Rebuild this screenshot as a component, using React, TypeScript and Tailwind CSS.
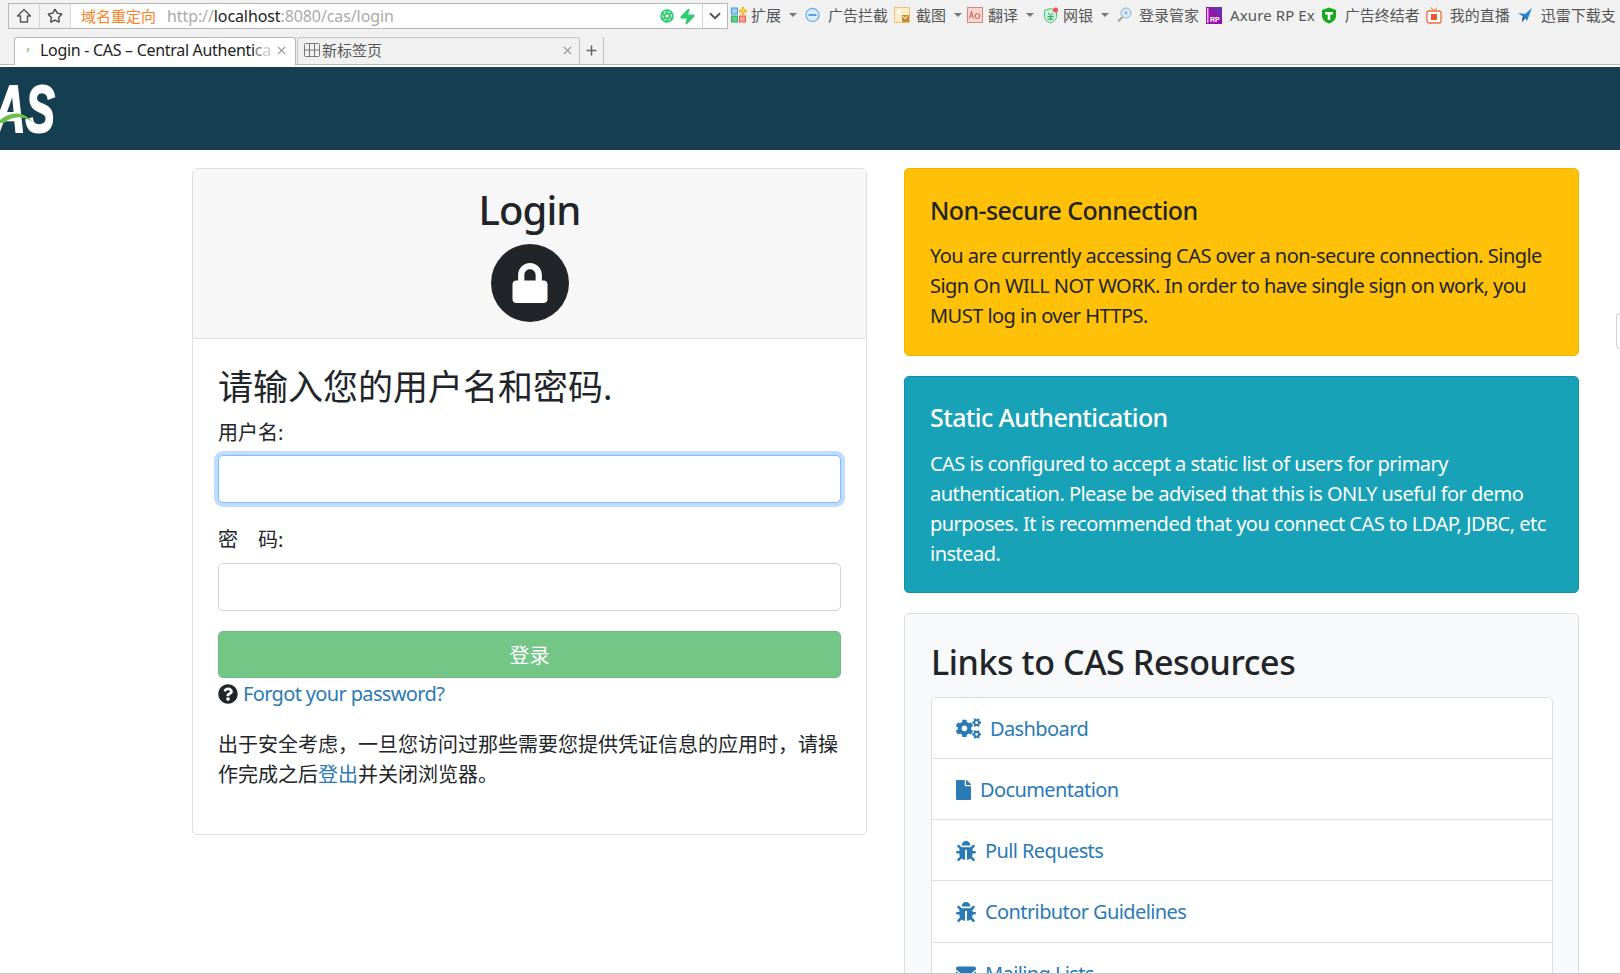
import React from "react";
import { Aperture, ChevronDown, Plus, Star, X, Zap } from "lucide-react";
import { FaBug, FaCogs, FaEnvelope, FaFile, FaLock, FaQuestionCircle } from "react-icons/fa";

function Caret() {
  return <span className="ml-[8px] mr-[8px] h-0 w-0 border-x-[4px] border-t-[4px] border-x-transparent border-t-[#777]" />;
}

function GridIcon() {
  return (
    <svg width="16" height="16" viewBox="0 0 16 16">
      <rect x="0.5" y="1" width="6" height="6" fill="#9fd3f5" stroke="#3a9bdc" />
      <rect x="0.5" y="9" width="6" height="6" fill="#5fd08a" stroke="#27ae60" />
      <rect x="8.5" y="9" width="6" height="6" fill="#f8a090" stroke="#e8604c" />
      <path d="M11 0.5h2v2.5h2.5v2h-2.5v2.5h-2v-2.5h-2.5v-2h2.5z" fill="#ffd84d" stroke="#e8a400" strokeWidth="0.7" />
    </svg>
  );
}

function MinusIcon() {
  return (
    <svg width="15" height="16" viewBox="0 0 15 16">
      <circle cx="7.5" cy="8" r="6.6" fill="#dcecfb" stroke="#6aaee8" strokeWidth="1.2" />
      <rect x="3.5" y="7" width="8" height="2" fill="#5a9fe0" />
    </svg>
  );
}

function ShotIcon() {
  return (
    <svg width="16" height="16" viewBox="0 0 16 16">
      <rect x="0.5" y="0.5" width="15" height="15" fill="#fbeec8" stroke="#e6ac4e" strokeDasharray="2 1" />
      <circle cx="5" cy="5" r="2" fill="#fff" />
      <rect x="8" y="8" width="7" height="7" fill="#c98a2b" />
      <path d="M9 9l2 3 2-3" stroke="#fff" fill="none" />
    </svg>
  );
}

function AoIcon() {
  return (
    <svg width="16" height="16" viewBox="0 0 16 16">
      <rect x="0.5" y="0.5" width="15" height="15" fill="#fbd5d0" stroke="#c98b84" />
      <path d="M2.5 11.5l2-7 2 7M3.3 9h2.4" stroke="#c0504d" fill="none" strokeWidth="0.9" />
      <circle cx="10.5" cy="9" r="2.4" stroke="#c0504d" fill="none" strokeWidth="0.9" />
    </svg>
  );
}

function BankIcon() {
  return (
    <svg width="16" height="17" viewBox="0 0 16 17">
      <path d="M7.5 1.5l6 2v6c0 3-3 5.5-6 6.5-3-1-6-3.5-6-6.5v-6z" fill="#c8f0d8" stroke="#4fb87c" />
      <path d="M5 6l2.5 2.5L10 6M4.5 9.5h6M4.5 12h6M7.5 8.5v5" stroke="#2f9e5f" fill="none" />
      <circle cx="12.5" cy="3" r="2.5" fill="#f0524f" />
    </svg>
  );
}

function SearchIcon() {
  return (
    <svg width="16" height="17" viewBox="0 0 16 17">
      <circle cx="10" cy="6" r="5" fill="#dbe9f5" stroke="#8fb2cf" />
      <circle cx="10" cy="6" r="1.7" fill="#9cc0dd" />
      <path d="M6.5 10L2 14.5" stroke="#a9a08a" strokeWidth="2" />
    </svg>
  );
}

function RpIcon() {
  return (
    <svg width="16" height="17" viewBox="0 0 16 17">
      <rect width="16" height="17" fill="#9a12a8" />
      <path d="M3 0h13v12z" fill="#6b2fb0" />
      <rect x="1" y="1" width="1.5" height="15" fill="#e8b8ee" />
      <text x="4" y="15" fontSize="7" fontWeight="700" fill="#fff" fontFamily="Liberation Sans">RP</text>
    </svg>
  );
}

function GreenShield() {
  return (
    <svg width="16" height="17" viewBox="0 0 16 17">
      <path d="M8 0.5l7 2.5v6c0 3.5-3.5 6.5-7 7.5-3.5-1-7-4-7-7.5v-6z" fill="#17a81f" />
      <path d="M4 5h8v2.5h-2.7v5.5h-2.6v-5.500h-2.700z" fill="#fff" />
    </svg>
  );
}

function TvIcon() {
  return (
    <svg width="16" height="17" viewBox="0 0 16 17">
      <path d="M5 0.5l3 3.5 3-3.5" stroke="#f06a3c" fill="none" />
      <rect x="1" y="4" width="14" height="12" rx="2" fill="#fff" stroke="#f06a3c" strokeWidth="1.3" />
      <rect x="5" y="7" width="6" height="6" fill="#f0552a" />
    </svg>
  );
}

function BirdIcon() {
  return (
    <svg width="16" height="17" viewBox="0 0 16 17">
      <path d="M15 1L8 7 1 6l5 3-1 6 3-4 2 3z" fill="#1f86d6" />
      <path d="M1 6l5 3-1 6 3-4z" fill="#333d4a" />
    </svg>
  );
}

function HomeIcon() {
  return (
    <svg width="16" height="16" viewBox="0 0 16 16" fill="none" stroke="#555" strokeWidth="1.4">
      <path d="M8 1.5L14.5 8H11.5v6h-7V8H1.500z" strokeLinejoin="round" />
    </svg>
  );
}

function TabGrid() {
  return (
    <svg width="16" height="14" viewBox="0 0 16 14" fill="none" stroke="#777">
      <rect x="0.5" y="0.5" width="15" height="13" rx="1" />
      <path d="M5.5 0.5v13M10.5 0.5v13M0.5 7h15" />
    </svg>
  );
}

function ToolText({ children, className }: { children: React.ReactNode; className: string }) {
  return <span className={"whitespace-nowrap text-[15px] text-[#555] " + className}>{children}</span>;
}

function BrowserChrome() {
  return (
    <div className="h-[67px] bg-white text-[#333]">
      <div className="flex h-[37px] bg-[#f1f1f1] pt-[3px]">
        <div className="ml-[8px] flex h-[26px] w-[720px] border border-[#b8b8b8] bg-white">
          <div className="flex w-[31px] items-center justify-center border-r border-[#d5d5d5] bg-[#f3f3f3]">
            <HomeIcon />
          </div>
          <div className="flex w-[31px] items-center justify-center border-r border-[#d5d5d5] bg-[#f3f3f3]">
            <Star size={16} color="#444" strokeWidth={2} />
          </div>
          <div className="flex flex-1 items-center">
            <span className="ml-[10px] text-[15px] text-[#ff7f1e]">域名重定向</span>
            <span className="ml-[11px] text-[16px] tracking-[-0.1px] text-[#aaa]">
              http://<span className="text-[#222]">localhost</span>:8080/cas/login
            </span>
          </div>
          <Aperture size={14} color="#2ecc71" strokeWidth={3} className="mr-[5px] self-center" />
          <Zap size={17} color="#2ecc71" fill="#2ecc71" className="mr-[6px] self-center" />
          <div className="flex w-[25px] items-center justify-center border-l border-[#d5d5d5]">
            <ChevronDown size={18} color="#555" strokeWidth={2.5} />
          </div>
        </div>
        <div className="ml-[3px] flex h-[24px] items-center">
          <GridIcon />
          <ToolText className="ml-[4px]">扩展</ToolText>
          <Caret />
          <MinusIcon />
          <ToolText className="ml-[8px]">广告拦截</ToolText>
          <span className="ml-[6px]"><ShotIcon /></span>
          <ToolText className="ml-[6px]">截图</ToolText>
          <Caret />
          <span className="ml-[-3px]"><AoIcon /></span>
          <ToolText className="ml-[5px]">翻译</ToolText>
          <Caret />
          <span className="ml-[1px]"><BankIcon /></span>
          <ToolText className="ml-[4px]">网银</ToolText>
          <Caret />
          <span className="ml-[-1px]"><SearchIcon /></span>
          <ToolText className="ml-[7px]">登录管家</ToolText>
          <span className="ml-[7px]"><RpIcon /></span>
          <ToolText className="ml-[8px] tracking-[0.1px]">Axure RP Ex</ToolText>
          <span className="ml-[6px]"><GreenShield /></span>
          <ToolText className="ml-[8px]">广告终结者</ToolText>
          <span className="ml-[6px]"><TvIcon /></span>
          <ToolText className="ml-[8px]">我的直播</ToolText>
          <span className="ml-[7px]"><BirdIcon /></span>
          <ToolText className="ml-[8px]">迅雷下载支</ToolText>
        </div>
      </div>
      <div className="flex h-[28px] border-b border-[#bbb] bg-[#f1f1f1]">
        <div className="relative z-10 ml-[14px] flex h-[28px] w-[282px] items-center rounded-t-[3px] border border-b-0 border-[#b8b8b8] bg-white pb-[3px]">
          <span className="ml-[12px] h-[4px] w-[2px] rotate-[20deg] bg-[#9ad27c]" />
          <span className="ml-[11px] w-[232px] overflow-hidden whitespace-nowrap text-[16px] tracking-[-0.3px] text-[#222]">
            Login - CAS – Central Authenti<span className="text-[#888]">c</span><span className="text-[#ccc]">a</span>
          </span>
          <X size={13} color="#999" className="ml-[3px]" />
        </div>
        <div className="ml-[1px] flex h-[27px] w-[283px] items-center rounded-t-[3px] border border-b-0 border-[#c4c4c4] bg-[#f1f1f1] pb-[2px]">
          <span className="ml-[6px]"><TabGrid /></span>
          <span className="ml-[2px] flex-1 text-[15px] text-[#555]">新标签页</span>
          <X size={13} color="#999" className="mr-[5px]" />
        </div>
        <div className="flex h-[27px] w-[24px] items-center justify-center border-r border-[#c4c4c4]">
          <Plus size={15} color="#666" strokeWidth={2.5} />
        </div>
      </div>
      <div className="h-[2px] bg-white" />
    </div>
  );
}

function CasLogo() {
  return (
    <svg width="70" height="83" viewBox="0 0 70 83" className="block">
      <text
        x="-38"
        y="65"
        fontFamily="Liberation Sans"
        fontWeight="700"
        fontStyle="italic"
        fontSize="66"
        fill="#fff"
        stroke="#fff"
        strokeWidth="2"
        textLength="93"
        lengthAdjust="spacingAndGlyphs"
      >
        CAS
      </text>
      <path d="M0 53C10 45 22 43 33 55C22 48 12 49 4 56L0 56Z" fill="#6cc04a" />
    </svg>
  );
}

function Field({ label, focused, labelGap, after }: { label: string; focused?: boolean; labelGap: string; after: string }) {
  return (
    <div className={after}>
      <div className={"h-[30px] leading-[30px] " + labelGap}>{label}</div>
      <div
        className={
          focused
            ? "h-[48px] rounded-[5px] border border-[#80bdff] bg-white shadow-[0_0_0_4px_rgba(0,123,255,0.25)]"
            : "h-[48px] rounded-[5px] border border-[#ced4da] bg-white"
        }
      />
    </div>
  );
}

function LoginCard() {
  return (
    <div className="h-[667px] w-[675px] shrink-0 rounded-[5px] border border-[#dfdfdf] bg-white">
      <div className="border-b border-[#dfdfdf] bg-[#f7f7f7] pb-[16px] pt-[17px] text-center">
        <h2 className="text-[40px] font-medium leading-[48px] tracking-[-0.9px] text-[#212529]">Login</h2>
        <div className="mx-auto mt-[10px] flex h-[78px] w-[78px] items-center justify-center rounded-full bg-[#212529]">
          <FaLock size={40} color="#fff" />
        </div>
      </div>
      <div className="px-[25px] pt-[27px]">
        <h3 className="text-[35px] font-normal leading-[42px] text-[#212529]">请输入您的用户名和密码.</h3>
        <div className="mt-[10px]">
          <Field label="用户名:" focused labelGap="mb-[7px]" after="mb-[22px]" />
          <Field label="密　码:" labelGap="mb-[8px]" after="mb-[20px]" />
        </div>
        <div className="flex h-[47px] items-center justify-center rounded-[5px] border border-[#6dbd81] bg-[#73c686] pt-[3px] text-white">登录</div>
        <div className="mt-[1px] flex h-[30px] items-center">
          <FaQuestionCircle size={20} color="#212529" />
          <a className="ml-[5px] tracking-[-0.65px] text-[#2a7ab5]">Forgot your password?</a>
        </div>
        <p className="mt-[21px] leading-[30px] text-[#212529]">
          出于安全考虑，一旦您访问过那些需要您提供凭证信息的应用时，请操作完成之后<a className="text-[#2a7ab5]">登出</a>并关闭浏览器。
        </p>
      </div>
    </div>
  );
}

function Notice({ title, tone, gap, children }: { title: string; tone: string; gap: string; children: React.ReactNode }) {
  return (
    <div className={"rounded-[5px] border px-[25px] " + tone}>
      <h4 className="text-[25px] font-medium leading-[36px] tracking-[-0.6px]">{title}</h4>
      <p className={"leading-[30px] tracking-[-0.53px] " + gap}>{children}</p>
    </div>
  );
}

function LinkRow({ icon, label, height, gap }: { icon: React.ReactNode; label: string; height: string; gap: string }) {
  return (
    <div className={"flex items-center border-b border-[#dfdfdf] pl-[24px] pt-[1px] text-[#2a7ab5] " + height}>
      {icon}
      <a className={"tracking-[-0.6px] " + gap}>{label}</a>
    </div>
  );
}

function ResourcesCard() {
  return (
    <div className="rounded-[5px] border border-[#dfdfdf] bg-[#f8f9fa] pl-[26px] pr-[25px] pt-[24px]">
      <h2 className="text-[34px] font-medium leading-[48px] tracking-[-0.4px] text-[#212529]">Links to CAS Resources</h2>
      <div className="mt-[11px] rounded-[5px] border border-[#dfdfdf] bg-white">
        <LinkRow icon={<FaCogs size={25} />} label="Dashboard" height="h-[61px]" gap="ml-[9px]" />
        <LinkRow icon={<FaFile className="h-[20px] w-[15px]" />} label="Documentation" height="h-[61px]" gap="ml-[9px]" />
        <LinkRow icon={<FaBug size={20} />} label="Pull Requests" height="h-[61px]" gap="ml-[9px]" />
        <LinkRow icon={<FaBug size={20} />} label="Contributor Guidelines" height="h-[62px]" gap="ml-[9px]" />
        <LinkRow icon={<FaEnvelope size={20} />} label="Mailing Lists" height="h-[61px]" gap="ml-[9px]" />
      </div>
    </div>
  );
}

export default function App() {
  return (
    <div className="relative h-[974px] w-[1620px] overflow-hidden bg-white font-['Noto_Sans','Noto_Sans_CJK_SC',sans-serif] text-[20px] text-[#212529]">
      <BrowserChrome />
      <div className="h-[83px] overflow-hidden bg-[#153e50]">
        <CasLogo />
      </div>
      <div className="flex h-[824px] gap-[37px] overflow-hidden border-b border-[#c8c8c8] pl-[192px] pt-[18px]">
        <LoginCard />
        <div className="flex w-[675px] shrink-0 flex-col gap-[20px]">
          <Notice title="Non-secure Connection" tone="border-[#f2b600] bg-[#ffc107] pb-[24px] pt-[23px] text-[#212529]" gap="mt-[13px]">
            You are currently accessing CAS over a non-secure connection. Single Sign On WILL NOT WORK. In order to have single sign on work, you MUST log in over HTTPS.
          </Notice>
          <Notice title="Static Authentication" tone="border-[#148fa3] bg-[#17a2b8] pb-[23px] pt-[22px] text-white" gap="mt-[14px]">
            CAS is configured to accept a static list of users for primary authentication. Please be advised that this is ONLY useful for demo purposes. It is recommended that you connect CAS to LDAP, JDBC, etc instead.
          </Notice>
          <ResourcesCard />
        </div>
      </div>
      <div className="absolute right-0 top-[313px] h-[36px] w-[4px] rounded-l-[4px] border border-r-0 border-[#c8d4e0] bg-white" />
    </div>
  );
}
